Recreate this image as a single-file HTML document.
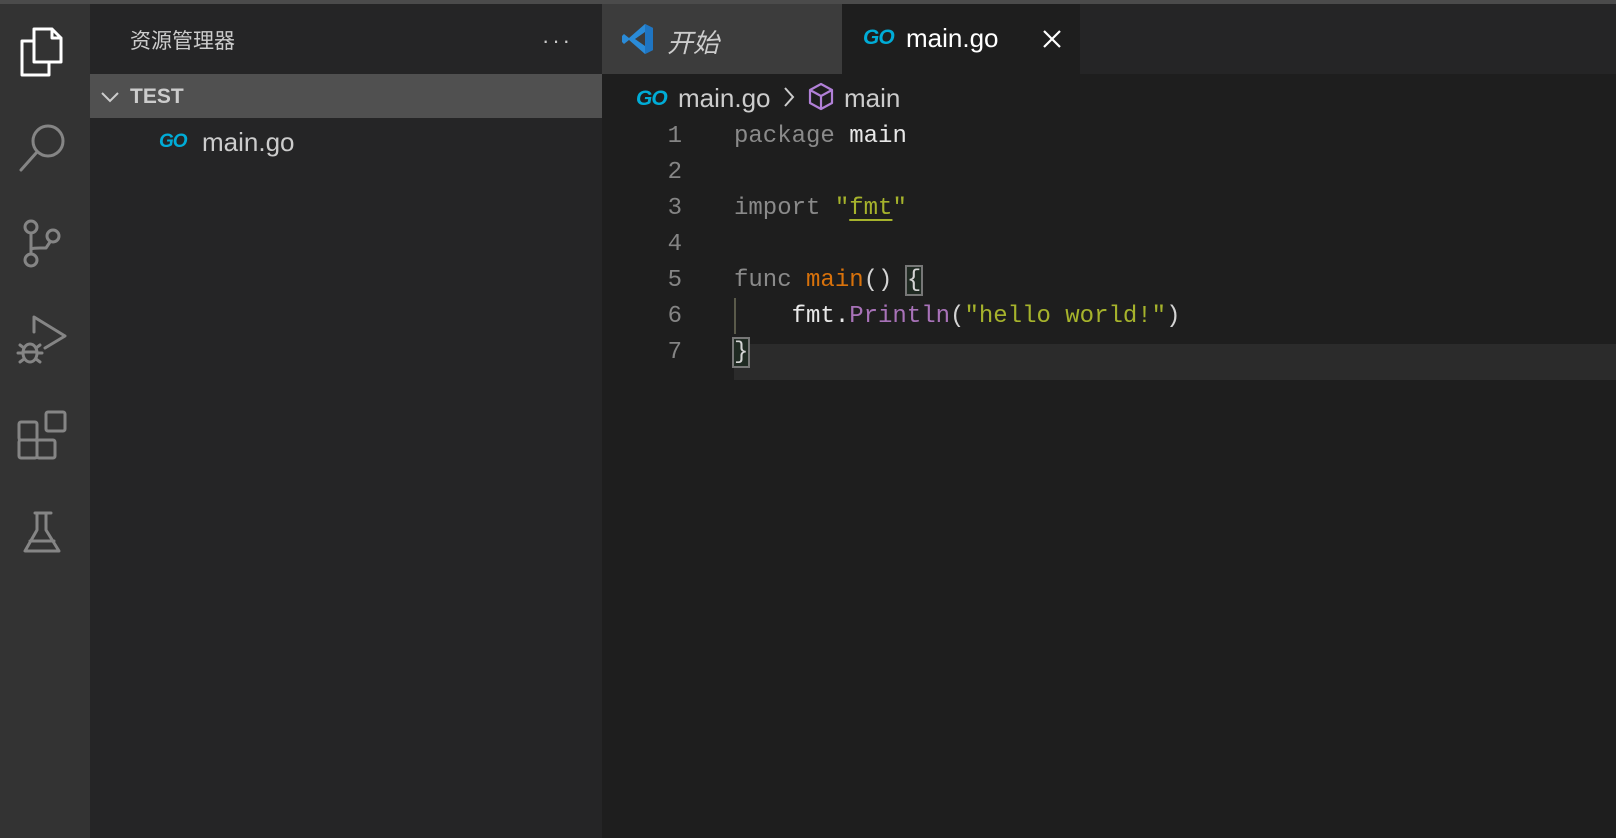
<!DOCTYPE html>
<html><head><meta charset="utf-8"><style>
body{margin:0;width:1616px;height:838px;background:#1e1e1e;position:relative;overflow:hidden;font-family:"Liberation Sans","Noto Sans CJK SC",sans-serif}
div{position:absolute;box-sizing:border-box}
.mono{font-family:"Liberation Mono","DejaVu Sans Mono",monospace;font-size:24px;white-space:pre}
.go{color:#00acd7;font-weight:bold;font-style:italic;font-family:"Liberation Sans",sans-serif;letter-spacing:-1px}
</style></head><body>
<div style="left:0;top:0;width:1616px;height:4px;background:#4b4b4b"></div>
<div style="left:0;top:4px;width:90px;height:834px;background:#333333"></div>
<svg style="position:absolute;left:0;top:0" width="90" height="600" fill="none" stroke-linejoin="round" stroke-linecap="round">
<g stroke="#fff" stroke-width="3">
<path d="M33 41 H22 V75 H49 V63"/>
<path d="M34 29 H52 L61 38 V62 H34 Z M52 29 V38 H61"/>
</g>
<g stroke="#858585" stroke-width="3">
<circle cx="48" cy="141" r="15"/><path d="M37 152 L21 170"/>
<circle cx="31" cy="227" r="6"/><circle cx="53" cy="236" r="6"/><circle cx="31" cy="260" r="6"/>
<path d="M31 233 V254 M31 249 Q33 248 40 248 H46 L50 242"/>
<path d="M34 332 V317 L65 336 L45 348"/>
<ellipse cx="30" cy="353" rx="7" ry="9"/><path d="M20 345 l4 3 M40 345 l-4 3 M18 353 h5 M37 353 h5 M20 362 l4 -3 M40 362 l-4 -3 M23 352 h14"/>
<rect x="19" y="422" width="18" height="18" rx="2"/><rect x="19" y="440" width="18" height="18" rx="2"/><rect x="37" y="440" width="18" height="18" rx="2"/><rect x="46" y="412" width="19" height="19" rx="2"/>
<path d="M35 513 H51 M37 513 V530 L25 551 H59 L46 530 V513 M30 541 H54"/>
</g></svg>
<div style="left:90px;top:4px;width:512px;height:834px;background:#252526"></div>
<div style="left:130px;top:25px;font-size:21px;color:#ccc">资源管理器</div>
<div style="left:542px;top:28px;font-size:22px;color:#ccc;letter-spacing:3px">···</div>
<div style="left:90px;top:74px;width:512px;height:44px;background:#505050"></div>
<svg style="position:absolute;left:100px;top:90px" width="20" height="14"><path d="M2 3 L10 11 L18 3" stroke="#ccc" stroke-width="2" fill="none"/></svg>
<div style="left:130px;top:85px;font-size:21px;font-weight:bold;color:#ccc">TEST</div>
<div class="go" style="left:159px;top:131px;font-size:19px">GO</div>
<div style="left:202px;top:127px;font-size:26px;color:#ccc">main.go</div>
<div style="left:602px;top:4px;width:1014px;height:70px;background:#252526"></div>
<div style="left:602px;top:4px;width:240px;height:70px;background:#3c3c3c"></div>
<svg style="position:absolute;left:621px;top:22px" width="34" height="34"><path d="M24 2 L32 6 V28 L24 32 L8 18 L3 22 L1 20 V14 L3 12 L8 16 Z" fill="#2a8bd8"/><path d="M24 2 L32 6 V28 L24 32 Z" fill="#1f75c2"/><path d="M24 10 L14 17 L24 24 Z" fill="#3c3c3c"/></svg>
<div style="left:667px;top:23px;font-size:26px;color:#ccc;font-style:italic">开始</div>
<div style="left:842px;top:4px;width:238px;height:70px;background:#1e1e1e"></div>
<div class="go" style="left:863px;top:26px;font-size:21px">GO</div>
<div style="left:906px;top:23px;font-size:26px;color:#fff">main.go</div>
<svg style="position:absolute;left:1042px;top:29px" width="20" height="20"><path d="M2 2 L18 18 M18 2 L2 18" stroke="#fff" stroke-width="2.2"/></svg>
<div class="go" style="left:636px;top:87px;font-size:21px">GO</div>
<div style="left:678px;top:83px;font-size:26px;color:#ccc">main.go</div>
<svg style="position:absolute;left:782px;top:86px" width="14" height="22"><path d="M3 2 L11 11 L3 20" stroke="#ccc" stroke-width="2" fill="none"/></svg>
<svg style="position:absolute;left:807px;top:81px" width="28" height="30" fill="none" stroke="#b180d7" stroke-width="2.2" stroke-linejoin="round"><path d="M14 3 L25 9 V22 L14 28 L3 22 V9 Z M3 9 L14 15 L25 9 M14 15 V28"/></svg>
<div style="left:844px;top:83px;font-size:26px;color:#ccc">main</div>
<div style="left:734px;top:344px;width:882px;height:36px;background:#2b2b2b"></div>
<div style="left:734px;top:298px;width:2px;height:36px;background:#5a5a4a"></div>
<div class="mono" style="left:660px;top:119px;line-height:36px;color:#858585;text-align:right;width:22px">1
2
3
4
5
6
7</div>
<div class="mono" style="left:734px;top:119px;line-height:36px;color:#d4d4d4"><span style="color:#8a8a8a">package</span> <span style="color:#e8e8e8">main</span>

<span style="color:#8a8a8a">import</span> <span style="color:#a6b32c">"<span style="text-decoration:underline;text-decoration-thickness:2px;text-underline-offset:5px">fmt</span>"</span>

<span style="color:#8a8a8a">func</span> <span style="color:#d9720b">main</span>() <span style="outline:2px solid #777;background:#1f2a22">{</span>
    <span style="color:#e8e8e8">fmt.</span><span style="color:#a872b8">Println</span>(<span style="color:#a6b32c">"hello world!"</span>)
<span style="outline:2px solid #777;background:#1f2a22">}</span></div>
</body></html>
